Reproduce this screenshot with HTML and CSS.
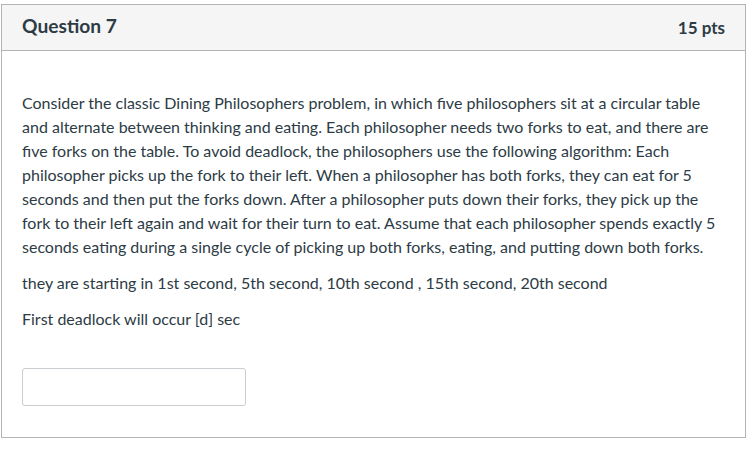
FILE: index.html
```html
<!DOCTYPE html>
<html>
<head>
<meta charset="utf-8">
<link rel="stylesheet" href="styles.css">
</head>
<body>
<div class="question">
  <div class="header">
    <h2 class="title">Question 7</h2>
    <div class="pts">15 pts</div>
  </div>
  <div class="content">
    <p>Consider the classic Dining Philosophers problem, in which five philosophers sit at a circular table and alternate between thinking and eating. Each philosopher needs two forks to eat, and there are five forks on the table. To avoid deadlock, the philosophers use the following algorithm: Each philosopher picks up the fork to their left. When a philosopher has both forks, they can eat for 5 seconds and then put the forks down. After a philosopher puts down their forks, they pick up the fork to their left again and wait for their turn to eat. Assume that each philosopher spends exactly 5 seconds eating during a single cycle of picking up both forks, eating, and putting down both forks.</p>
    <p>they are starting in 1st second, 5th second, 10th second , 15th second, 20th second</p>
    <p>First deadlock will occur [d] sec</p>
    <div class="answer"><input class="field" type="text"></div>
  </div>
</div>
</body>
</html>
```
FILE: styles.css
```css
html, body {
  margin: 0;
  padding: 0;
  background: #fff;
}
body {
  font-family: Lato, "Liberation Sans", sans-serif;
  color: #2d3b45;
  padding: 4px 0 0 1px;
}
.question {
  width: 743px;
  border: 1px solid #b4b4b4;
}
.header {
  display: flex;
  justify-content: space-between;
  align-items: center;
  background: #f5f5f5;
  border-bottom: 1px solid #b4b4b4;
  height: 45px;
  padding: 0 20px 0 20px;
}
.title {
  margin: 0;
  font-size: 19.2px;
  font-weight: 700;
  color: #2d3b45;
  padding-bottom: 4px;
}
.pts {
  font-size: 17px;
  font-weight: 700;
  color: #2d3b45;
}
.content {
  padding: 40px 20px 31px 20px;
  font-size: 16px;
  line-height: 24px;
}
.content p {
  margin: 0 0 12px 0;
}
.answer {
  padding-top: 25px;
}
.field {
  display: block;
  box-sizing: border-box;
  width: 224px;
  height: 38px;
  border: 1px solid #c7cdd1;
  border-radius: 3px;
  margin: 0;
  padding: 0;
}
```
